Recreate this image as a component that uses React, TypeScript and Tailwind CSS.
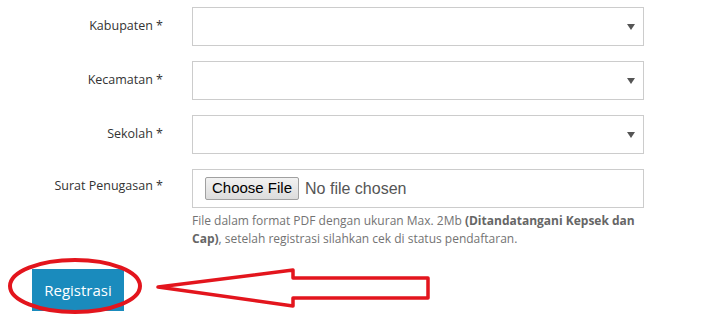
import React from "react"

const fields = ["Kabupaten *", "Kecamatan *", "Sekolah *"]

function SelectRow({ label }: { label: string }) {
  return (
    <div className="flex items-start mb-[15px]">
      <label className="w-[163px] shrink-0 pt-[9px] text-right text-[12.5px] leading-[20px] text-[#333]">
        {label}
      </label>
      <div className="ml-[29px] flex h-[39px] w-[452px] items-center justify-end border border-[#ccc] bg-white pr-[8px]">
        <svg width="8" height="6" viewBox="0 0 8 6">
          <path d="M0 0h8L4 6z" fill="#555" />
        </svg>
      </div>
    </div>
  )
}

export default function App() {
  return (
    <div
      className="relative h-[314px] w-[711px] overflow-hidden bg-white pt-[7px]"
      style={{ fontFamily: '"Open Sans", sans-serif' }}
    >
      {fields.map((f) => (
        <SelectRow key={f} label={f} />
      ))}

      <div className="flex items-start">
        <label className="w-[163px] shrink-0 pt-[7px] text-right text-[12.5px] leading-[20px] text-[#333]">
          Surat Penugasan *
        </label>
        <div className="ml-[29px] w-[452px]">
          <div className="flex h-[39px] items-center border border-[#ccc] bg-white pl-[12px]">
            <span
              className="flex h-[23px] items-center rounded-[2px] border border-[#a0a0a0] bg-gradient-to-b from-[#f2f2f2] to-[#dcdcdc] px-[6px] text-[15px] text-black"
              style={{ fontFamily: '"Liberation Sans", Arial, sans-serif' }}
            >
              Choose File
            </span>
            <span
              className="ml-[6px] text-[16px] text-[#555]"
              style={{ fontFamily: '"Liberation Sans", Arial, sans-serif' }}
            >
              No file chosen
            </span>
          </div>
          <p className="mt-[4px] text-[12px] leading-[18px] text-[#737373]">
            File dalam format PDF dengan ukuran Max. 2Mb{" "}
            <b className="font-bold text-[#666]">(Ditandatangani Kepsek dan Cap)</b>, setelah
            registrasi silahkan cek di status pendaftaran.
          </p>
        </div>
      </div>

      <div className="mt-[21px] pl-[32px]">
        <button className="h-[42px] w-[92px] bg-[#1a8bbd] text-[15px] text-white">
          Registrasi
        </button>
      </div>

      <svg
        className="pointer-events-none absolute left-0 top-0"
        width="711"
        height="314"
        viewBox="0 0 711 314"
      >
        <ellipse cx="75" cy="286" rx="65" ry="26" fill="none" stroke="#e3151d" strokeWidth="4" />
        <path
          d="M158 287 L293 270 L293 278 L428 278 L428 298 L293 298 L293 306 Z"
          fill="none"
          stroke="#e3151d"
          strokeWidth="3.5"
          strokeLinejoin="round"
        />
      </svg>
    </div>
  )
}
